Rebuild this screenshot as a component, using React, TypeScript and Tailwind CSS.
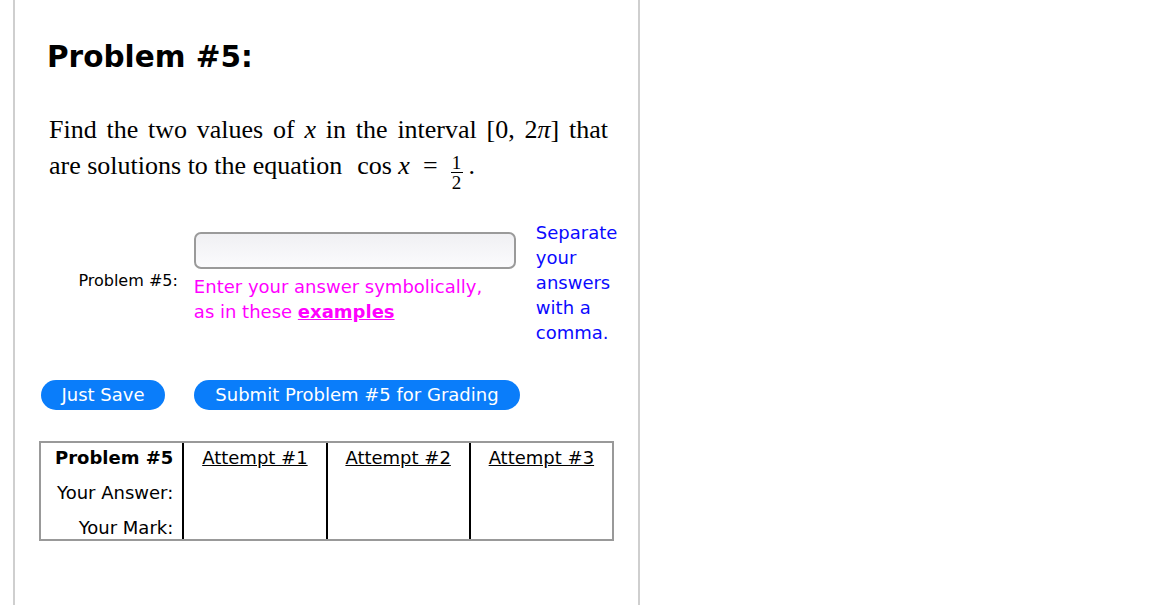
import React from "react";

const sans = "font-['DejaVu_Sans',Verdana,sans-serif]";
const serif = "font-['Liberation_Serif','Times_New_Roman',serif]";

const attempts = ["Attempt #1", "Attempt #2", "Attempt #3"];

const Fraction = () => (
  <span className="ml-[13px] mr-[6px] inline-flex translate-y-[4px] flex-col items-center align-middle text-[19px] leading-[17px]">
    <span className="px-[1px]">1</span>
    <span className="my-[1px] h-px w-[12px] bg-black" />
    <span className="px-[1px]">2</span>
  </span>
);

const App = () => (
  <div className="min-h-[605px] w-[1170px] bg-white">
    <div className={`ml-[13px] flex min-h-[605px] w-[627px] flex-col border-x-2 border-[#cfcfcf] pl-[26px] pr-4 ${sans}`}>
      <h1 className="ml-[6px] mt-[39px] text-[29.5px] font-bold leading-[36px] text-black">Problem #5:</h1>

      <p className={`mt-[37px] w-[567px] pl-[8px] text-justify text-[26px] leading-[36px] text-black [text-align-last:left] ${serif}`}>
        Find the two values of <i>x</i> in the interval [0,&nbsp;2<i>π</i>] that are solutions to the equation
        <span className="ml-[15px]">cos&nbsp;<i>x</i></span>
        <span className="ml-[13px]">=</span>
        <Fraction />.
      </p>

      <div className="mt-[33px] flex items-start">
        <div className="mt-[51px] w-[143px] text-right text-[16px] leading-5 text-black">Problem #5:</div>
        <div className="ml-[16px] mt-[12px] flex w-[322px] flex-col">
          <div className="h-[37px] w-[322px] rounded-[7px] border-2 border-[#9a9a9a] bg-gradient-to-b from-[#f0f0f3] to-[#fbfbfd]" />
          <p className="mt-[5px] w-[300px] text-[18px] leading-[25px] text-[#ff00ff]">
            Enter your answer symbolically, as in these{" "}
            <span className="font-bold underline">examples</span>
          </p>
        </div>
        <p className="ml-[20px] w-[90px] text-[18px] leading-[25px] text-[#0a0aff]">
          Separate your answers with a comma.
        </p>
      </div>

      <div className="mt-[35px] flex items-center gap-[29px]">
        <button className="h-[30px] w-[124px] rounded-full bg-[#0a7dfa] text-[18px] text-white">Just Save</button>
        <button className="h-[30px] w-[326px] rounded-full bg-[#0a7dfa] text-[18px] text-white">
          Submit Problem #5 for Grading
        </button>
      </div>

      <div className="mt-[31px] ml-[-2px] flex h-[100px] w-[575px] border-2 border-[#999] text-[18px] text-black">
        <div className="flex w-[142px] flex-col items-end pr-[9px]">
          <span className="h-[30px] font-bold leading-[30px]">Problem #5</span>
          <span className="mt-[2px] leading-[35px]">Your Answer:</span>
          <span className="leading-[35px]">Your Mark:</span>
        </div>
        {attempts.map((a) => (
          <div key={a} className="flex w-[144px] justify-center border-l-2 border-black">
            <span className="leading-[30px] underline">{a}</span>
          </div>
        ))}
      </div>
    </div>
  </div>
);

export default App;
